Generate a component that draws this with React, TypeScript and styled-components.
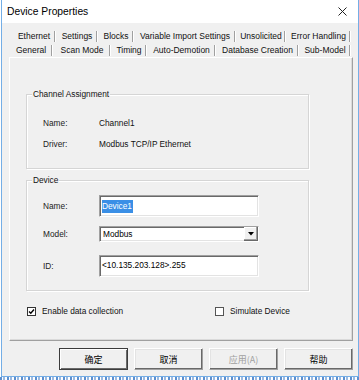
import React from 'react'
import styled, { createGlobalStyle } from 'styled-components'

const GlobalStyle = createGlobalStyle`
  html, body {
    margin: 0;
    padding: 0;
    background: #fff;
  }
  body {
    font-family: "Liberation Sans", Arial, sans-serif;
    color: #111;
  }
`

const Screen = styled.div`
  width: 359px;
  height: 380px;
  overflow: hidden;
  background: #fff;
`

const Window = styled.div`
  margin-left: 1px;
  width: 358px;
  height: 377px;
  box-sizing: border-box;
  border: 1px solid #74aee6;
  border-top: none;
  background: #f0f0f0;
  display: flex;
  flex-direction: column;
`

const Noise = styled.div`
  height: 3px;
  background: repeating-linear-gradient(90deg, #5c8fd0 0 2px, #fff 2px 3px, #9bb9e0 3px 5px, #fff 5px 7px);
`

const TitleBar = styled.div`
  height: 23px;
  flex: none;
  background: #fff;
  display: flex;
  align-items: center;
  padding-left: 5px;
  font-size: 10.3px;
  color: #000;
`

const Close = styled.svg`
  margin-left: auto;
  margin-right: 11px;
`

const TabRow = styled.div<{ $left: number; $top?: number }>`
  display: flex;
  height: 14px;
  padding-left: ${(p) => p.$left}px;
  margin-top: ${(p) => p.$top ?? 0}px;
`

const Tab = styled.div<{ $w: number }>`
  position: relative;
  width: ${(p) => p.$w}px;
  flex: none;
  display: flex;
  align-items: center;
  justify-content: center;
  font-size: 8.5px;
  white-space: nowrap;
  color: #111;

  &::after {
    content: '';
    position: absolute;
    right: 1px;
    top: 2px;
    bottom: 1px;
    width: 1px;
    background: #a0a0a0;
    box-shadow: 1px 0 #fff;
  }
`

const TabPage = styled.div`
  margin: 0 5px 0 7px;
  height: 284px;
  box-sizing: border-box;
  border-top: 1px solid #fff;
  border-left: 1px solid #fff;
  border-right: 1px solid #a0a0a0;
  border-bottom: 1px solid #a0a0a0;
  box-shadow: inset -1px -1px #dadada;
  display: flex;
  flex-direction: column;
`

const Group = styled.div<{ $top: number; $h: number; $pt: number }>`
  position: relative;
  margin: ${(p) => p.$top}px 0 0 16px;
  width: 283px;
  height: ${(p) => p.$h}px;
  box-sizing: border-box;
  border: 1px solid #d5d5d5;
  box-shadow: inset 1px 1px #fff, 1px 1px #fff;
  padding: ${(p) => p.$pt}px 0 0 16px;
  display: flex;
  flex-direction: column;
`

const GroupTitle = styled.div`
  position: absolute;
  top: -6px;
  left: 5px;
  padding: 0 1px;
  background: #f0f0f0;
  font-size: 8.3px;
  line-height: 10px;
  color: #111;
`

const InfoRow = styled.div`
  display: flex;
  align-items: center;
  height: 21px;
  font-size: 8.3px;
`

const FieldRow = styled.div<{ $top: number }>`
  display: flex;
  align-items: center;
  margin-top: ${(p) => p.$top}px;
  font-size: 8.3px;
`

const Label = styled.div`
  width: 56px;
  flex: none;
  color: #222;
`

const TextBox = styled.div`
  width: 160px;
  height: 22px;
  box-sizing: border-box;
  background: #fff;
  border-top: 1px solid #a0a0a0;
  border-left: 1px solid #a0a0a0;
  border-right: 1px solid #fff;
  border-bottom: 1px solid #fff;
  box-shadow: inset 1px 1px #696969, inset -1px -1px #e3e3e3;
  padding: 4px 0 0 2px;
  font-size: 8.3px;
  line-height: 11px;
  color: #000;
  white-space: nowrap;
`

const Selected = styled.span`
  display: inline-block;
  background: #3a8fe6;
  color: #fff;
  padding: 1px 1px 1px 0;
`

const SelectBox = styled.div`
  width: 160px;
  height: 16px;
  box-sizing: border-box;
  background: #fff;
  border-top: 1px solid #a0a0a0;
  border-left: 1px solid #a0a0a0;
  border-right: 1px solid #fff;
  border-bottom: 1px solid #fff;
  box-shadow: inset 1px 1px #696969, inset -1px -1px #e3e3e3;
  display: flex;
  align-items: center;
  padding-left: 3px;
  font-size: 8.3px;
  color: #000;
`

const DropButton = styled.div`
  margin-left: auto;
  width: 14px;
  height: 14px;
  box-sizing: border-box;
  background: #f0f0f0;
  border-right: 1px solid #696969;
  border-bottom: 1px solid #696969;
  box-shadow: inset -1px -1px #a0a0a0, inset 1px 1px #fff;
  display: flex;
  align-items: center;
  justify-content: center;
`

const CheckRow = styled.div`
  display: flex;
  align-items: center;
  margin: 13px 0 0 17px;
  height: 14px;
  font-size: 8.3px;
`

const CheckItem = styled.div<{ $w?: number }>`
  display: flex;
  align-items: center;
  width: ${(p) => (p.$w ? `${p.$w}px` : 'auto')};
  color: #111;
`

const Box = styled.div<{ $dark?: boolean }>`
  width: 9px;
  height: 9px;
  box-sizing: border-box;
  border: 1px solid ${(p) => (p.$dark ? '#333' : '#555')};
  background: #fff;
  margin-right: 6px;
  display: flex;
  align-items: center;
  justify-content: center;
`

const ButtonRow = styled.div`
  display: flex;
  justify-content: flex-end;
  gap: 6px;
  margin-top: 7px;
  padding-right: 5px;
`

const Button = styled.div<{ $default?: boolean; $disabled?: boolean }>`
  width: 69px;
  height: 22px;
  box-sizing: border-box;
  border: 1px solid ${(p) => (p.$default ? '#3c3c3c' : '#a0a0a0')};
  border-top-color: ${(p) => (p.$default ? '#3c3c3c' : '#fff')};
  border-left-color: ${(p) => (p.$default ? '#3c3c3c' : '#fff')};
  box-shadow: ${(p) =>
    p.$default
      ? 'inset 1px 1px #fff, inset -1px -1px #696969'
      : 'inset -1px -1px #696969, inset 1px 1px #e3e3e3'};
  display: flex;
  align-items: center;
  justify-content: center;
  font-family: "Noto Sans CJK SC", "Liberation Sans", sans-serif;
  font-size: 9px;
  color: ${(p) => (p.$disabled ? '#a0a0a0' : '#000')};
`

const row1: [string, number][] = [
  ['Ethernet', 44],
  ['Settings', 42],
  ['Blocks', 36],
  ['Variable Import Settings', 102],
  ['Unsolicited', 50],
  ['Error Handling', 65],
]

const row2: [string, number][] = [
  ['General', 44],
  ['Scan Mode', 58],
  ['Timing', 36],
  ['Auto-Demotion', 69],
  ['Database Creation', 83],
  ['Sub-Model', 52],
]

export default function App() {
  return (
    <Screen>
      <GlobalStyle />
      <Window>
        <TitleBar>
          Device Properties
          <Close width="9" height="9" viewBox="0 0 9 9">
            <path d="M0.5 0.5 L8.5 8.5 M8.5 0.5 L0.5 8.5" stroke="#222" strokeWidth="1" />
          </Close>
        </TitleBar>
        <TabRow $left={10} $top={6}>
          {row1.map(([t, w]) => (
            <Tab key={t} $w={w}>
              {t}
            </Tab>
          ))}
        </TabRow>
        <TabRow $left={7}>
          {row2.map(([t, w]) => (
            <Tab key={t} $w={w}>
              {t}
            </Tab>
          ))}
        </TabRow>
        <TabPage>
          <Group $top={36} $h={75} $pt={17}>
            <GroupTitle>Channel Assignment</GroupTitle>
            <InfoRow>
              <Label>Name:</Label>
              Channel1
            </InfoRow>
            <InfoRow>
              <Label>Driver:</Label>
              Modbus TCP/IP Ethernet
            </InfoRow>
          </Group>
          <Group $top={11} $h={111} $pt={14}>
            <GroupTitle>Device</GroupTitle>
            <FieldRow $top={0}>
              <Label>Name:</Label>
              <TextBox>
                <Selected>Device1</Selected>
              </TextBox>
            </FieldRow>
            <FieldRow $top={9}>
              <Label>Model:</Label>
              <SelectBox>
                Modbus
                <DropButton>
                  <svg width="6" height="4" viewBox="0 0 6 4">
                    <path d="M0 0 H6 L3 3.5 Z" fill="#000" />
                  </svg>
                </DropButton>
              </SelectBox>
            </FieldRow>
            <FieldRow $top={13}>
              <Label>ID:</Label>
              <TextBox>&lt;10.135.203.128&gt;.255</TextBox>
            </FieldRow>
          </Group>
          <CheckRow>
            <CheckItem $w={188}>
              <Box $dark>
                <svg width="7" height="7" viewBox="0 0 7 7">
                  <path d="M1 3.5 L2.8 5.3 L6 1.5" stroke="#000" strokeWidth="1.4" fill="none" />
                </svg>
              </Box>
              Enable data collection
            </CheckItem>
            <CheckItem>
              <Box />
              Simulate Device
            </CheckItem>
          </CheckRow>
        </TabPage>
        <ButtonRow>
          <Button $default>确定</Button>
          <Button>取消</Button>
          <Button $disabled>应用(A)</Button>
          <Button>帮助</Button>
        </ButtonRow>
      </Window>
      <Noise />
    </Screen>
  )
}
